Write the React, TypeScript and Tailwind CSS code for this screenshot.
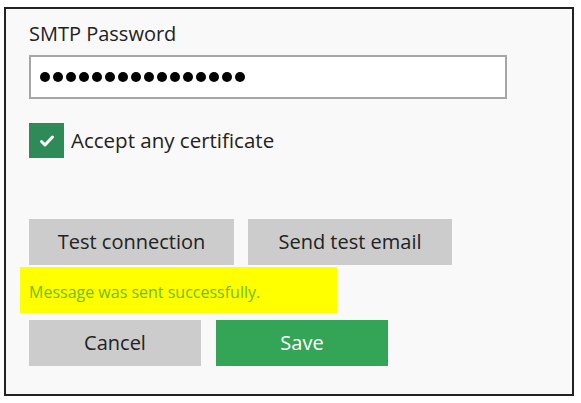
export default function App() {
  const dots = Array.from({ length: 16 });
  return (
    <div className="w-[581px] h-[403px] bg-white pt-[7px] pl-[4px] font-['Open_Sans',sans-serif]">
      <div className="w-[570px] h-[389px] border-2 border-[#222] bg-[#f9f9f9] pl-[23px] pt-[11px]">
        <div className="text-[20px] leading-[28px] text-[#222]">SMTP Password</div>
        <div className="mt-[7px] w-[478px] h-[44px] bg-white border-2 border-[#a6a6a6] flex items-center pl-[9px] gap-[3px]">
          {dots.map((_, i) => (
            <span key={i} className="w-[10px] h-[10px] rounded-full bg-black" />
          ))}
        </div>
        <label className="mt-[24px] flex items-center gap-[7px]">
          <span className="w-[35px] h-[35px] bg-[#2e8b57] flex items-center justify-center">
            <svg width="16" height="14" viewBox="0 0 16 14" fill="none">
              <path d="M2.5 7.5 L6 11 L13.5 3" stroke="white" strokeWidth="3" strokeLinecap="round" strokeLinejoin="round" />
            </svg>
          </span>
          <span className="text-[20.5px] text-[#222]">Accept any certificate</span>
        </label>
        <div className="mt-[61px] flex gap-[14px]">
          <button className="w-[205px] h-[46px] bg-[#cccccc] text-[20px] text-[#222]">Test connection</button>
          <button className="w-[204px] h-[46px] bg-[#cccccc] text-[20px] text-[#222]">Send test email</button>
        </div>
        <div className="mt-[2px] ml-[-9px] w-[317px] h-[46px] bg-[#ffff00] pl-[9px] pt-[3px] flex items-center text-[16px] text-[#72bd0c]">
          Message was sent successfully.
        </div>
        <div className="mt-[7px] flex gap-[15px]">
          <button className="w-[172px] h-[46px] bg-[#cccccc] text-[20px] text-[#222]">Cancel</button>
          <button className="w-[172px] h-[46px] bg-[#34a556] text-[20px] text-white">Save</button>
        </div>
      </div>
    </div>
  );
}
